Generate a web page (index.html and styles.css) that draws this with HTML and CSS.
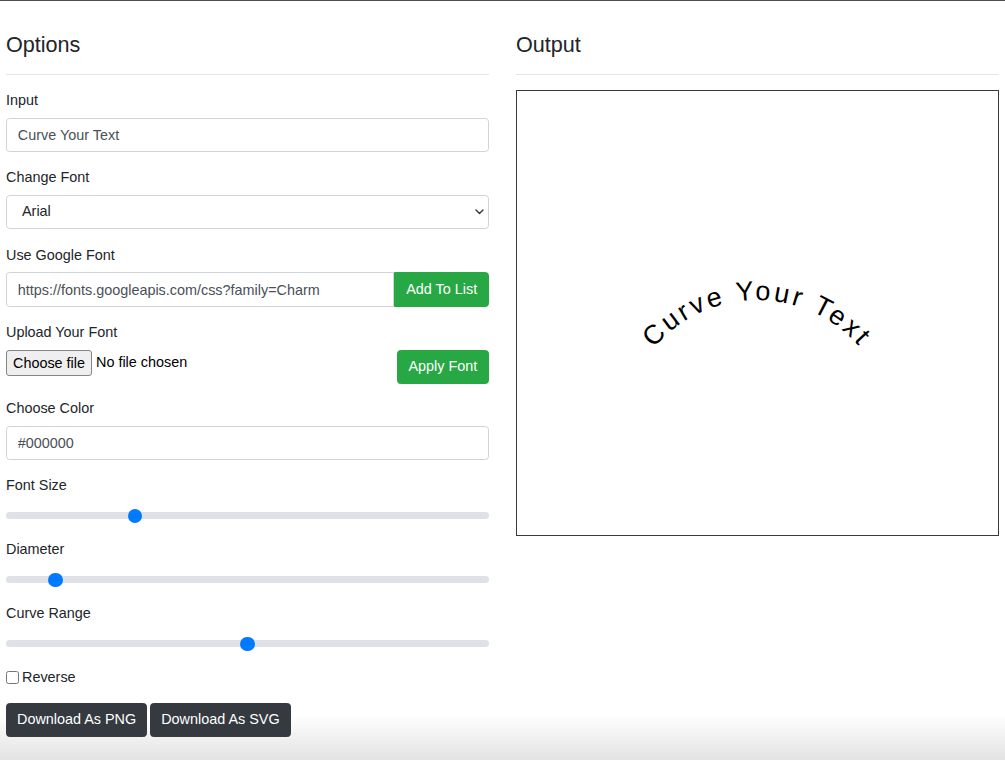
FILE: index.html
```html
<!DOCTYPE html>
<html lang="en">
<head>
  <meta charset="UTF-8" />
  <meta name="viewport" content="width=device-width, initial-scale=1.0"/>
  <title>Curve Your Text</title>
  <link rel="stylesheet" href="styles.css">
</head>
<body>
  <div class="row">
    <div class="col">
      <h4>Options</h4>
      <hr>

      <div class="form-group">
        <label for="textInput">Input</label>
        <input type="text" id="textInput" class="form-control" value="Curve Your Text" />
      </div>

      <div class="form-group">
        <label for="fontSelect">Change Font</label>
        <div class="select-wrap">
          <select id="fontSelect" class="form-control">
            <option>Arial</option>
            <option>Times New Roman</option>
            <option>Courier New</option>
          </select>
          <svg class="chevron" width="9" height="6" viewBox="0 0 9 6">
            <path d="M1 1l3.5 3.5L8 1" fill="none" stroke="#333" stroke-width="1.4" stroke-linecap="round" stroke-linejoin="round"/>
          </svg>
        </div>
      </div>

      <div class="form-group">
        <label for="googleFont">Use Google Font</label>
        <div class="input-group">
          <input type="text" id="googleFont" class="form-control" value="https://fonts.googleapis.com/css?family=Charm" />
          <button type="button" class="btn btn-success">Add To List</button>
        </div>
      </div>

      <div class="form-group upload">
        <label>Upload Your Font</label>
        <div class="upload-row">
          <div class="file-pick">
            <label class="file-btn"><input type="file" hidden />Choose file</label>
            <span>No file chosen</span>
          </div>
          <button type="button" class="btn btn-success">Apply Font</button>
        </div>
      </div>

      <div class="form-group">
        <label for="colorInput">Choose Color</label>
        <input type="text" id="colorInput" class="form-control" value="#000000" />
      </div>

      <div class="range-group">
        <label for="fontSize">Font Size</label>
        <input type="range" id="fontSize" class="custom-range" min="0" max="100" value="26" />
      </div>

      <div class="range-group">
        <label for="diameter">Diameter</label>
        <input type="range" id="diameter" class="custom-range" min="0" max="100" value="9" />
      </div>

      <div class="range-group">
        <label for="curveRange">Curve Range</label>
        <input type="range" id="curveRange" class="custom-range" min="-100" max="100" value="0" />
      </div>

      <div class="check">
        <input type="checkbox" id="reverse" />
        <label for="reverse">Reverse</label>
      </div>

      <div class="downloads">
        <button type="button" class="btn btn-dark">Download As PNG</button>
        <button type="button" class="btn btn-dark">Download As SVG</button>
      </div>
    </div>

    <div class="col">
      <h4>Output</h4>
      <hr>
      <div class="output">
        <svg width="481" height="444" viewBox="0 0 481 444">
          <defs>
            <path id="curve" d="M123.1 276.5 A135 135 0 0 1 356.9 276.5" fill="none" />
          </defs>
          <text font-family="Liberation Sans, Arial, sans-serif" font-size="27" letter-spacing="3" fill="#000">
            <textPath href="#curve" startOffset="50%" text-anchor="middle">Curve Your Text</textPath>
          </text>
        </svg>
      </div>
    </div>
  </div>
</body>
</html>
```

FILE: styles.css
```css
html {
  border-top: 1px solid #4d4d4d;
  background: linear-gradient(to bottom, #fff 0, #fff 714px, #e2e2e2 760px) no-repeat;
  min-height: 100%;
}
body {
  margin: 0;
  padding: 31px 6px 0;
  font-family: "Liberation Sans", Arial, sans-serif;
  font-size: 14.4px;
  line-height: 1.5;
  color: #212529;
}
.row {
  display: grid;
  grid-template-columns: 1fr 1fr;
  column-gap: 27px;
}
h4 {
  margin: 0;
  font-size: 21.6px;
  font-weight: 400;
  line-height: 1.2;
}
hr {
  margin: 16px 0 15px;
  border: 0;
  border-top: 1px solid rgba(0, 0, 0, .1);
}
label {
  display: inline-block;
  margin-bottom: 6.2px;
}
.form-group {
  margin-bottom: 15.4px;
}
.form-group.upload {
  margin-bottom: 13.4px;
}
.form-control {
  display: block;
  width: 100%;
  box-sizing: border-box;
  height: 34.2px;
  padding: 5.4px 10.8px;
  font-family: inherit;
  font-size: 14.4px;
  line-height: 1.5;
  color: #495057;
  background: #fff;
  border: 1px solid #ced4da;
  border-radius: 3.6px;
  outline: none;
}
.select-wrap {
  position: relative;
}
.select-wrap select {
  appearance: none;
  -webkit-appearance: none;
  padding-left: 15px;
  color: #212529;
}
.select-wrap .chevron {
  position: absolute;
  right: 5px;
  top: 14px;
}
.input-group {
  display: flex;
}
.input-group .form-control {
  flex: 1;
  border-top-right-radius: 0;
  border-bottom-right-radius: 0;
}
.input-group .btn {
  border-top-left-radius: 0;
  border-bottom-left-radius: 0;
}
.btn {
  display: inline-block;
  padding: 5.4px 10.8px;
  font-family: inherit;
  font-size: 14.4px;
  line-height: 1.5;
  border: 1px solid transparent;
  border-radius: 3.6px;
  cursor: pointer;
  white-space: nowrap;
}
.btn-success {
  color: #fff;
  background-color: #28a745;
  border-color: #28a745;
}
.btn-dark {
  color: #fff;
  background-color: #343a40;
  border-color: #343a40;
}
.upload-row {
  display: flex;
  justify-content: space-between;
  align-items: flex-start;
}
.file-pick {
  display: flex;
  align-items: center;
  gap: 4px;
  color: #000;
}
.file-btn {
  margin: 0;
  padding: 1px 6px;
  line-height: 22px;
  color: #000;
  background: #efefef;
  border: 1px solid #858585;
  border-radius: 3px;
}
.range-group label {
  margin-bottom: 9px;
}
.range-group {
  margin-bottom: 13.4px;
}
.custom-range {
  display: block;
  width: 100%;
  height: 20px;
  margin: 0;
  padding: 0;
  background: transparent;
  -webkit-appearance: none;
  appearance: none;
}
.custom-range::-webkit-slider-runnable-track {
  height: 7.2px;
  background: #dee2e6;
  border-radius: 14.4px;
}
.custom-range::-webkit-slider-thumb {
  -webkit-appearance: none;
  width: 14.4px;
  height: 14.4px;
  margin-top: -3.6px;
  border: 0;
  border-radius: 50%;
  background: #007bff;
}
.check {
  display: flex;
  align-items: center;
  margin-bottom: 14px;
}
.check input {
  width: 13px;
  height: 13px;
  margin: 0 3px 0 0;
}
.check label {
  margin: 0;
}
.downloads {
  display: flex;
  gap: 3px;
}
.downloads .btn {
  padding: 5.4px 10px;
}
.output {
  height: 446px;
  box-sizing: border-box;
  border: 1px solid #3a3a3a;
  background: #fff;
}
.output svg {
  display: block;
}
```
